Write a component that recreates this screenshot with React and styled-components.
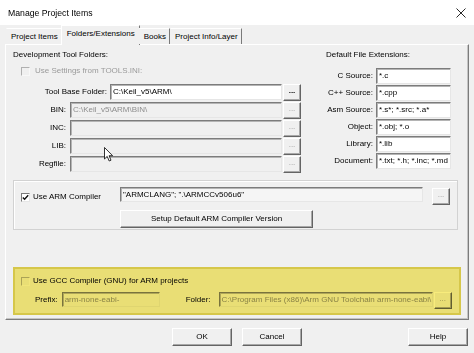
import React from 'react';
import styled, { createGlobalStyle } from 'styled-components';

const Global = createGlobalStyle`
  html, body { margin: 0; padding: 0; background: #f0f0f0; }
  body { font-family: "Liberation Sans", Arial, sans-serif; font-size: 8px; color: #000; }
  * { box-sizing: border-box; }
`;

const Window = styled.div`
  position: relative;
  width: 474px;
  height: 353px;
  background: #f0f0f0;
  overflow: hidden;
  display: flex;
  flex-direction: column;
`;

const TitleBar = styled.div`
  height: 25px;
  flex: none;
  background: #fff;
  display: flex;
  align-items: center;
  justify-content: space-between;
  padding: 0 8px 0 8px;
  font-size: 8.7px;
  color: #000;
`;

const CloseIcon = styled.svg`
  width: 10px;
  height: 10px;
  display: block;
`;

const TabStrip = styled.div`
  height: 19px;
  flex: none;
  display: flex;
  align-items: flex-end;
  padding-left: 6px;
  position: relative;
  z-index: 1;
`;

const Tab = styled.div`
  height: ${(p) => (p.$active ? '20px' : '16px')};
  margin: ${(p) => (p.$active ? '0 -1px -1px -1px' : '0')};
  padding: ${(p) => (p.$active ? '3px 4px 0 5px' : '3px 3px 0 4px')};
  background: #f0f0f0;
  border-top: 1px solid #fff;
  border-left: 1px solid ${(p) => (p.$active ? '#fff' : 'transparent')};
  border-right: 1px solid ${(p) => (p.$first ? 'transparent' : '#7a7a7a')};
  line-height: 10px;
  white-space: nowrap;
`;

const Panel = styled.div`
  margin: 0 5px;
  height: 276px;
  flex: none;
  border-top: 1px solid #fff;
  border-left: 1px solid #fff;
  border-right: 1px solid #7c7c7c;
  border-bottom: 1px solid #7c7c7c;
  box-shadow: inset -1px -1px 0 #c4c4c4;
  padding: 5px 0 0 7px;
  display: flex;
  flex-direction: column;
`;

const TopSection = styled.div`
  display: flex;
  gap: 25px;
`;

const Column = styled.div`
  width: ${(p) => p.$w}px;
  display: flex;
  flex-direction: column;
`;

const Heading = styled.div`
  line-height: 10px;
  height: 10px;
  white-space: nowrap;
  color: ${(p) => (p.$disabled ? '#9a9a9a' : '#000')};
`;

const CheckRow = styled.label`
  display: flex;
  align-items: center;
  gap: ${(p) => p.$gap || 4}px;
  width: ${(p) => (p.$w ? `${p.$w}px` : 'auto')};
  flex: none;
  height: ${(p) => p.$h || 12}px;
  margin-top: ${(p) => p.$mt || 0}px;
  padding-left: ${(p) => p.$pl || 0}px;
  color: ${(p) => (p.$disabled ? '#9a9a9a' : '#000')};
  white-space: nowrap;
  line-height: 10px;
`;

const Box = styled.span`
  width: 9px;
  height: 9px;
  flex: none;
  display: inline-flex;
  align-items: center;
  justify-content: center;
  border: 1px solid;
  border-color: ${(p) => (p.$disabled ? '#b0b0b0 #f8f8f8 #f8f8f8 #b0b0b0' : '#7a7a7a #e6e6e6 #e6e6e6 #7a7a7a')};
  background: ${(p) => (p.$disabled ? '#f0f0f0' : '#fff')};
`;

const FieldList = styled.div`
  display: flex;
  flex-direction: column;
  gap: ${(p) => p.$gap}px;
  margin-top: ${(p) => p.$mt}px;
`;

const FieldRow = styled.div`
  display: flex;
  align-items: flex-start;
  height: 16px;
`;

const Label = styled.span`
  width: ${(p) => p.$w}px;
  flex: none;
  text-align: right;
  padding-right: ${(p) => p.$pr || 3}px;
  line-height: 16px;
  white-space: nowrap;
`;

const Input = styled.div`
  flex: ${(p) => (p.$w ? 'none' : '1')};
  width: ${(p) => (p.$w ? `${p.$w}px` : 'auto')};
  height: ${(p) => p.$h || 16}px;
  border: 1px solid;
  border-color: #7c7c7c #e6e6e6 #e6e6e6 #7c7c7c;
  box-shadow: inset 1px 1px 0 #b4b4b4;
  background: ${(p) => (p.$disabled ? 'transparent' : p.$bg || '#fff')};
  color: ${(p) => (p.$disabled ? '#8e8e8e' : '#000')};
  padding: 0 2px;
  line-height: ${(p) => (p.$h || 16) - 2}px;
  white-space: nowrap;
  overflow: hidden;
`;

const Button = styled.div`
  width: ${(p) => p.$w}px;
  height: ${(p) => p.$h || 18}px;
  flex: none;
  margin-left: ${(p) => p.$ml || 0}px;
  margin-top: ${(p) => p.$mt || 0}px;
  border: 1px solid;
  border-color: #fff #646464 #646464 #fff;
  box-shadow: inset -1px -1px 0 #a8a8a8;
  background: transparent;
  display: flex;
  align-items: center;
  justify-content: center;
  color: ${(p) => (p.$disabled ? '#9a9a9a' : '#000')};
  font-weight: ${(p) => (p.$bold ? 700 : 400)};
  white-space: nowrap;
  line-height: 10px;
  padding-bottom: ${(p) => (p.$dots ? '3px' : '0')};
`;

const GroupBox = styled.div`
  margin-top: 8px;
  margin-right: 10px;
  height: 50px;
  border: 1px solid #d2d2d2;
  box-shadow: inset 1px 1px 0 #fff;
  padding: 6px 0 0 7px;
  display: flex;
`;

const GroupRight = styled.div`
  display: flex;
  flex-direction: column;
`;

const InlineRow = styled.div`
  display: flex;
  align-items: flex-start;
  margin-top: ${(p) => p.$mt || 0}px;
`;

const Highlight = styled.div`
  position: relative;
  margin-top: 37px;
  margin-right: 7px;
  height: 48px;
  border: 2px solid #d6c74a;
  padding: 7px 0 0 6px;
  display: flex;
  flex-direction: column;
  &::after {
    content: '';
    position: absolute;
    inset: 0;
    background: #f8ec7c;
    mix-blend-mode: multiply;
    pointer-events: none;
  }
`;

const PlainLabel = styled.span`
  margin-left: ${(p) => p.$ml || 0}px;
  margin-right: ${(p) => p.$mr || 0}px;
  white-space: nowrap;
  line-height: 15px;
`;

const Footer = styled.div`
  display: flex;
  gap: 10px;
  margin-top: 8px;
  padding: 0 6px 0 172px;
`;

const Spacer = styled.div`
  flex: 1;
`;

const Cursor = styled.svg`
  position: absolute;
  left: 104px;
  top: 147px;
  width: 10px;
  height: 16px;
  z-index: 5;
`;

const Check = () => (
  <svg width="7" height="7" viewBox="0 0 7 7">
    <path d="M0.8 3.4 L2.6 5.3 L6.2 1.2" fill="none" stroke="#111" strokeWidth="1.4" />
  </svg>
);

export default function App() {
  return (
    <>
      <Global />
      <Window>
        <TitleBar>
          <span>Manage Project Items</span>
          <CloseIcon viewBox="0 0 10 10">
            <path d="M0.5 0.5 L9.5 9.5 M9.5 0.5 L0.5 9.5" stroke="#111" strokeWidth="0.9" />
          </CloseIcon>
        </TitleBar>
        <TabStrip>
          <Tab $first>Project Items</Tab>
          <Tab $active>Folders/Extensions</Tab>
          <Tab>Books</Tab>
          <Tab>Project Info/Layer</Tab>
        </TabStrip>
        <Panel>
          <TopSection>
            <Column $w={288}>
              <Heading>Development Tool Folders:</Heading>
              <CheckRow $mt={5} $pl={8} $gap={5} $disabled>
                <Box $disabled />
                Use Settings from TOOLS.INI:
              </CheckRow>
              <FieldList $gap={2} $mt={7}>
                <FieldRow>
                  <Label $w={97}>Tool Base Folder:</Label>
                  <Input>C:\Keil_v5\ARM\</Input>
                  <Button $w={18} $h={17} $ml={1} $bold $dots>...</Button>
                </FieldRow>
                <FieldRow>
                  <Label $w={57} $pr={4}>BIN:</Label>
                  <Input $disabled>C:\Keil_v5\ARM\BIN\</Input>
                  <Button $w={18} $h={17} $ml={1} $disabled $dots>...</Button>
                </FieldRow>
                <FieldRow>
                  <Label $w={57} $pr={4}>INC:</Label>
                  <Input $disabled />
                  <Button $w={18} $h={17} $ml={1} $disabled $dots>...</Button>
                </FieldRow>
                <FieldRow>
                  <Label $w={57} $pr={4}>LIB:</Label>
                  <Input $disabled />
                  <Button $w={18} $h={17} $ml={1} $disabled $dots>...</Button>
                </FieldRow>
                <FieldRow>
                  <Label $w={57} $pr={4}>Regfile:</Label>
                  <Input $disabled />
                  <Button $w={18} $h={17} $ml={1} $disabled $dots>...</Button>
                </FieldRow>
              </FieldList>
            </Column>
            <Column $w={125}>
              <Heading>Default File Extensions:</Heading>
              <FieldList $gap={1} $mt={8}>
                <FieldRow>
                  <Label $w={50}>C Source:</Label>
                  <Input>*.c</Input>
                </FieldRow>
                <FieldRow>
                  <Label $w={50}>C++ Source:</Label>
                  <Input>*.cpp</Input>
                </FieldRow>
                <FieldRow>
                  <Label $w={50}>Asm Source:</Label>
                  <Input>*.s*; *.src; *.a*</Input>
                </FieldRow>
                <FieldRow>
                  <Label $w={50}>Object:</Label>
                  <Input>*.obj; *.o</Input>
                </FieldRow>
                <FieldRow>
                  <Label $w={50}>Library:</Label>
                  <Input>*.lib</Input>
                </FieldRow>
                <FieldRow>
                  <Label $w={50}>Document:</Label>
                  <Input>*.txt; *.h; *.inc; *.md</Input>
                </FieldRow>
              </FieldList>
            </Column>
          </TopSection>

          <GroupBox>
            <CheckRow $h={16} $mt={2} $gap={3} $w={99}>
              <Box>
                <Check />
              </Box>
              Use ARM Compiler
            </CheckRow>
            <GroupRight>
              <InlineRow>
                <Input $w={303} $h={15} $bg="#f5f5f5">"ARMCLANG"; ".\ARMCCv506u6"</Input>
                <Button $w={18} $h={17} $ml={9} $mt={1} $disabled $dots>...</Button>
              </InlineRow>
              <Button $w={193} $h={18} $mt={5}>Setup Default ARM Compiler Version</Button>
            </GroupRight>
          </GroupBox>

          <Highlight>
            <CheckRow $h={10} $gap={3}>
              <Box $disabled />
              Use GCC Compiler (GNU) for ARM projects
            </CheckRow>
            <InlineRow $mt={6}>
              <PlainLabel $ml={14} $mr={4}>Prefix:</PlainLabel>
              <Input $w={98} $h={15} $disabled>arm-none-eabi-</Input>
              <PlainLabel $ml={26} $mr={8}>Folder:</PlainLabel>
              <Input $w={214} $h={15} $disabled>C:\Program Files (x86)\Arm GNU Toolchain arm-none-eabi\</Input>
              <Button $w={18} $h={17} $ml={1} $disabled $dots>...</Button>
            </InlineRow>
          </Highlight>
        </Panel>
        <Footer>
          <Button $w={60} $h={18}>OK</Button>
          <Button $w={60} $h={18}>Cancel</Button>
          <Spacer />
          <Button $w={60} $h={18}>Help</Button>
        </Footer>
        <Cursor viewBox="0 0 10 16">
          <path d="M0.5 0.5 L0.5 12 L3.2 9.4 L5.2 14 L7 13.2 L5.1 8.7 L8.6 8.7 Z" fill="#fff" stroke="#000" strokeWidth="0.8" strokeLinejoin="round" />
        </Cursor>
      </Window>
    </>
  );
}
